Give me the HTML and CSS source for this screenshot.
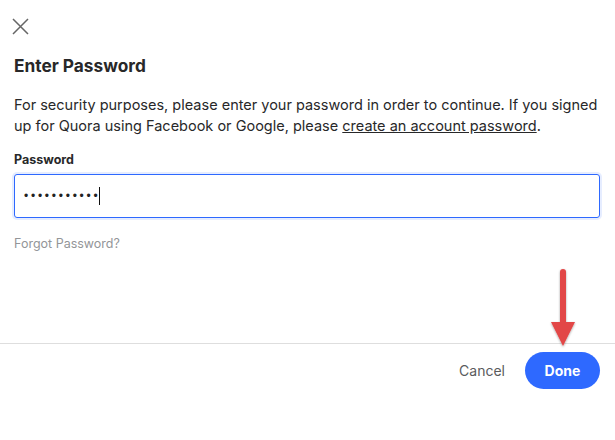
FILE: index.html
```html
<!DOCTYPE html>
<html>
<head>
<meta charset="utf-8">
<link rel="stylesheet" href="styles.css">
</head>
<body>
<div class="modal">
  <div class="main">
    <button class="close" aria-label="Close">
      <svg width="17" height="17" viewBox="0 0 17 17"><path d="M1 1 L16 16 M16 1 L1 16" stroke="#666" stroke-width="1.5" fill="none"/></svg>
    </button>
    <h1 class="title">Enter Password</h1>
    <p class="desc">For security purposes, please enter your password in order to continue. If you signed up for Quora using Facebook or Google, please <a class="link" href="#">create an account password</a>.</p>
    <div class="label">Password</div>
    <div class="input"><span class="dots">•••••••••••</span><span class="caret"></span></div>
    <div class="forgot">Forgot Password?</div>
  </div>
  <div class="footer">
    <button class="cancel">Cancel</button>
    <button class="done">Done</button>
  </div>
  <svg class="arrow" width="26" height="82" viewBox="0 0 26 82">
    <defs><filter id="sh" x="-30%" y="-10%" width="160%" height="130%"><feDropShadow dx="0" dy="1" stdDeviation="0.8" flood-color="#000" flood-opacity="0.35"/></filter></defs>
    <g filter="url(#sh)">
      <line x1="13" y1="5" x2="13" y2="60" stroke="#e24646" stroke-width="6" stroke-linecap="round"/>
      <polygon points="1,55 25,55 13,79" fill="#e24646"/>
    </g>
  </svg>
</div>
</body>
</html>
```
FILE: styles.css
```css
* { box-sizing: border-box; }
html, body { margin: 0; padding: 0; background: #fff; }
body { font-family: Inter, "Liberation Sans", Arial, sans-serif; color: #282829; }
.modal { position: relative; width: 615px; height: 440px; }
.main { height: 344px; padding: 18px 14px 0 14px; border-bottom: 1px solid #dedede; }
.close { display: block; width: 17px; height: 17px; padding: 0; margin: 0 0 0 -2px; border: 0; background: none; }
.close svg { display: block; }
.title { margin: 20px 0 0; font-size: 17.3px; line-height: 22px; font-weight: 700; color: #282829; }
.desc { margin: 17px 0 0; font-size: 14.5px; line-height: 21px; color: #282829; }
.link { color: #282829; text-decoration: underline; }
.label { margin-top: 16px; font-size: 12.5px; line-height: 16px; font-weight: 700; }
.input { margin-top: 6px; margin-right: 1px; height: 44px; border: 1px solid #2e69ff; border-radius: 3px; box-shadow: 0 0 0 2px rgba(46,105,255,0.12); display: flex; align-items: center; padding-left: 9px; }
.dots { font-family: "Liberation Sans", Arial, sans-serif; font-size: 12px; letter-spacing: 2.75px; color: #222; line-height: 16px; }
.caret { width: 1px; height: 18px; background: #111; margin-left: -1px; }
.forgot { margin-top: 18px; font-size: 12.5px; line-height: 16px; color: #939598; }
.footer { display: flex; justify-content: flex-end; align-items: center; gap: 20px; padding: 8px 15px 0 0; }
.cancel { border: 0; background: none; padding: 0; font-family: inherit; font-size: 14px; color: #5a5b5d; }
.done { border: 0; background: #2e69ff; color: #fff; font-family: inherit; font-weight: 700; font-size: 14px; width: 75px; height: 37px; border-radius: 19px; padding: 0; }
.arrow { position: absolute; left: 550px; top: 267px; overflow: visible; }
```
